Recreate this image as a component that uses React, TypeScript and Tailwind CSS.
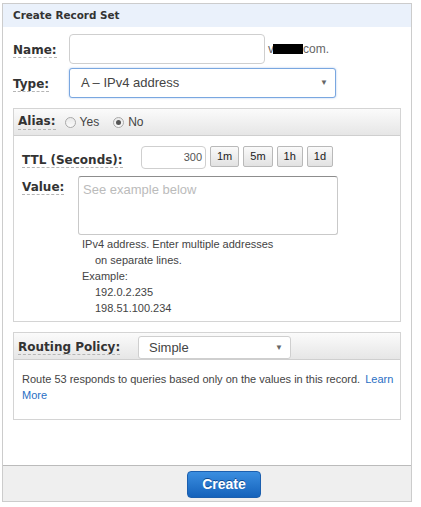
import React from 'react';

const labelFont = "font-['DejaVu_Sans',Verdana,sans-serif]";
const bodyFont = "font-['Liberation_Sans',Arial,sans-serif]";

function Label({ children, className = '' }: { children: React.ReactNode; className?: string }) {
  return (
    <span
      className={`${labelFont} text-[12px] font-bold text-[#333] leading-[15px] border-b border-dashed border-[#b5b5b5] ${className}`}
    >
      {children}
    </span>
  );
}

function Arrow() {
  return <span className="text-[8px] text-[#666] leading-none">▼</span>;
}

function Radio({ checked }: { checked?: boolean }) {
  return (
    <span className="inline-flex items-center justify-center w-[11px] h-[11px] rounded-full border border-[#a9a9a9] bg-gradient-to-b from-[#e9e9e9] to-[#fafafa]">
      {checked && <span className="w-[5px] h-[5px] rounded-full bg-[#555]" />}
    </span>
  );
}

function TtlButton({ children }: { children: React.ReactNode }) {
  return (
    <button className="h-[21px] px-[6px] border border-[#b9b9b9] rounded-[2px] bg-gradient-to-b from-[#fafafa] to-[#e2e2e2] text-[11px] text-[#222] leading-none">
      {children}
    </button>
  );
}

export default function App() {
  return (
    <div className={`${bodyFont} pt-[3px] pl-[2px] bg-white`}>
      <div className="w-[410px] border border-[#cccccc] bg-white">
        {/* header */}
        <div className="h-[23px] bg-[#eaf1fb] flex items-center pl-[10px]">
          <span className={`${labelFont} text-[10.4px] font-bold text-[#333]`}>Create Record Set</span>
        </div>

        <div className="px-[10px] pb-[45px]">
          {/* Name */}
          <div className="flex items-center mt-[7px] h-[30px]">
            <div className="w-[56px]">
              <Label>Name:</Label>
            </div>
            <div className="w-[196px] h-[30px] border border-[#cfcfcf] rounded-[4px] bg-white" />
            <span className="ml-[3px] flex items-center text-[12px] text-[#666]">
              <span>v</span>
              <span className="inline-block w-[30px] h-[10px] bg-black -ml-[1px]" />
              com.
            </span>
          </div>

          {/* Type */}
          <div className="flex items-center mt-[4px] h-[30px]">
            <div className="w-[56px]">
              <Label>Type:</Label>
            </div>
            <div className="w-[267px] h-[30px] border border-[#7aa7e0] rounded-[3px] bg-white flex items-center justify-between pl-[11px] pr-[7px] shadow-[0_0_2px_rgba(80,140,220,0.5)]">
              <span className="text-[13px] text-[#444]">A – IPv4 address</span>
              <Arrow />
            </div>
          </div>

          {/* Alias box */}
          <div className="mt-[10px] border border-[#d4d4d4]">
            <div className="h-[27px] bg-gradient-to-b from-[#fbfbfb] to-[#e6e6e6] border-b border-[#cfcfcf] flex items-center pl-[4px] gap-[4px]">
              <Label>Alias:</Label>
              <span className="flex items-center gap-[4px] ml-[5px] text-[12px] text-[#444]">
                <Radio /> Yes
              </span>
              <span className="flex items-center gap-[4px] ml-[10px] text-[12px] text-[#444]">
                <Radio checked /> No
              </span>
            </div>

            <div className="pl-[8px] pt-[10px] pb-[5px]">
              {/* TTL */}
              <div className="flex items-center h-[22px]">
                <div className="w-[119px] pt-[3px]">
                  <Label>TTL (Seconds):</Label>
                </div>
                <div className="w-[65px] h-[23px] border border-[#cfcfcf] rounded-[4px] flex items-center justify-end pr-[3px] text-[11px] text-[#555]">
                  300
                </div>
                <div className="flex gap-[4px] ml-[4px] -mt-[2px]">
                  <TtlButton>1m</TtlButton>
                  <TtlButton>5m</TtlButton>
                  <TtlButton>1h</TtlButton>
                  <TtlButton>1d</TtlButton>
                </div>
              </div>

              {/* Value */}
              <div className="flex mt-[8px]">
                <div className="w-[56px] -mt-[2px]">
                  <Label>Value:</Label>
                </div>
                <div className="w-[260px] h-[59px] border border-[#c9c9c9] border-t-[#8d8d8d] rounded-[3px] pl-[4px] pt-[3px] text-[13px] text-[#bbb]">
                  See example below
                </div>
              </div>

              <div className="ml-[60px] mt-[1px] text-[11px] leading-[16px] text-[#444]">
                <div>IPv4 address. Enter multiple addresses</div>
                <div className="pl-[13px]">on separate lines.</div>
                <div>Example:</div>
                <div className="pl-[13px]">192.0.2.235</div>
                <div className="pl-[13px]">198.51.100.234</div>
              </div>
            </div>
          </div>

          {/* Routing policy box */}
          <div className="mt-[10px] border border-[#d4d4d4]">
            <div className="h-[27px] bg-gradient-to-b from-[#fbfbfb] to-[#e6e6e6] border-b border-[#cfcfcf] flex items-center pl-[4px]">
              <div className="w-[120px]">
                <Label>Routing Policy:</Label>
              </div>
              <div className="w-[153px] h-[23px] border border-[#cfcfcf] rounded-[3px] bg-white flex items-center justify-between pl-[10px] pr-[7px] mt-[3px]">
                <span className="text-[13px] text-[#444]">Simple</span>
                <Arrow />
              </div>
            </div>
            <div className="pl-[8px] pr-[2px] pt-[11px] pb-[16px] text-[11px] leading-[16px] text-[#444]">
              Route 53 responds to queries based only on the values in this record.{' '}
              <a className="text-[#2a6fc4] ml-[2px]">Learn More</a>
            </div>
          </div>
        </div>

        {/* footer */}
        <div className="h-[36px] bg-[#efefef] border-t border-[#bbbbbb] flex items-center pl-[184px]">
          <button className="w-[74px] h-[27px] rounded-[4px] border border-[#1c5fae] bg-gradient-to-b from-[#3a8ee0] to-[#1462bb] text-white text-[14px] font-bold [text-shadow:0_-1px_0_#0d4a91] mt-[1px]">
            Create
          </button>
        </div>
      </div>
    </div>
  );
}
